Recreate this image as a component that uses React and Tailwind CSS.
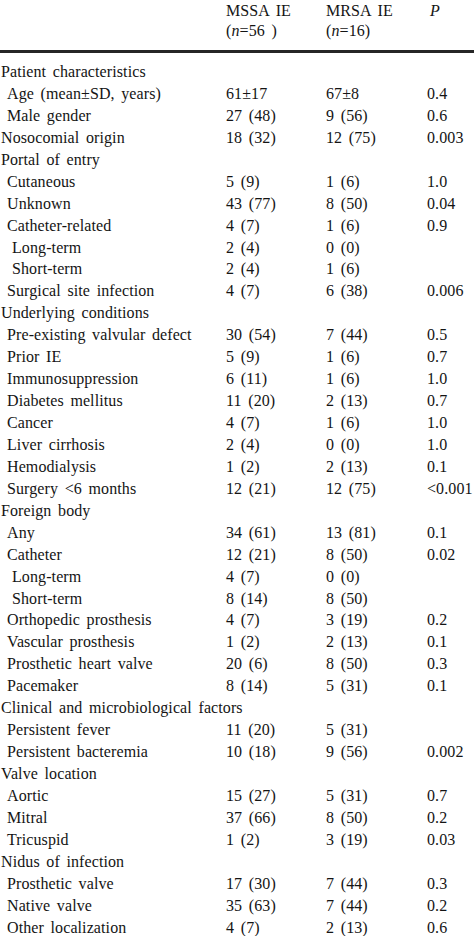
const rows = [
    ['Patient characteristics', 0],
    ['Age (mean±SD, years)', 1, '61±17', '67±8', '0.4'],
    ['Male gender', 1, '27 (48)', '9 (56)', '0.6'],
    ['Nosocomial origin', 0, '18 (32)', '12 (75)', '0.003'],
    ['Portal of entry', 0],
    ['Cutaneous', 1, '5 (9)', '1 (6)', '1.0'],
    ['Unknown', 1, '43 (77)', '8 (50)', '0.04'],
    ['Catheter-related', 1, '4 (7)', '1 (6)', '0.9'],
    ['Long-term', 2, '2 (4)', '0 (0)', ''],
    ['Short-term', 2, '2 (4)', '1 (6)', ''],
    ['Surgical site infection', 1, '4 (7)', '6 (38)', '0.006'],
    ['Underlying conditions', 0],
    ['Pre-existing valvular defect', 1, '30 (54)', '7 (44)', '0.5'],
    ['Prior IE', 1, '5 (9)', '1 (6)', '0.7'],
    ['Immunosuppression', 1, '6 (11)', '1 (6)', '1.0'],
    ['Diabetes mellitus', 1, '11 (20)', '2 (13)', '0.7'],
    ['Cancer', 1, '4 (7)', '1 (6)', '1.0'],
    ['Liver cirrhosis', 1, '2 (4)', '0 (0)', '1.0'],
    ['Hemodialysis', 1, '1 (2)', '2 (13)', '0.1'],
    ['Surgery <6 months', 1, '12 (21)', '12 (75)', '<0.001'],
    ['Foreign body', 0],
    ['Any', 1, '34 (61)', '13 (81)', '0.1'],
    ['Catheter', 1, '12 (21)', '8 (50)', '0.02'],
    ['Long-term', 2, '4 (7)', '0 (0)', ''],
    ['Short-term', 2, '8 (14)', '8 (50)', ''],
    ['Orthopedic prosthesis', 1, '4 (7)', '3 (19)', '0.2'],
    ['Vascular prosthesis', 1, '1 (2)', '2 (13)', '0.1'],
    ['Prosthetic heart valve', 1, '20 (6)', '8 (50)', '0.3'],
    ['Pacemaker', 1, '8 (14)', '5 (31)', '0.1'],
    ['Clinical and microbiological factors', 0],
    ['Persistent fever', 1, '11 (20)', '5 (31)', ''],
    ['Persistent bacteremia', 1, '10 (18)', '9 (56)', '0.002'],
    ['Valve location', 0],
    ['Aortic', 1, '15 (27)', '5 (31)', '0.7'],
    ['Mitral', 1, '37 (66)', '8 (50)', '0.2'],
    ['Tricuspid', 1, '1 (2)', '3 (19)', '0.03'],
    ['Nidus of infection', 0],
    ['Prosthetic valve', 1, '17 (30)', '7 (44)', '0.3'],
    ['Native valve', 1, '35 (63)', '7 (44)', '0.2'],
    ['Other localization', 1, '4 (7)', '2 (13)', '0.6'],
]

const indent = ['pl-[1px]', 'pl-[7px]', 'pl-[12px]']

export default function App() {
    return (
        <div className="h-[936px] w-[474px] overflow-hidden bg-white font-['Liberation_Serif',serif] text-[16px] tracking-[0.1px] [word-spacing:2.5px] text-[#141414]">
            {/* header */}
            <div className="grid grid-cols-[226px_100px_101px_1fr] pt-[1px] leading-[20px]">
                <div />
                <div>
                    <div>MSSA IE</div>
                    <div>
                        (<i>n</i>=56 )
                    </div>
                </div>
                <div>
                    <div>MRSA IE</div>
                    <div>
                        (<i>n</i>=16)
                    </div>
                </div>
                <div className="pl-[3px]">
                    <i>P</i>
                </div>
            </div>

            <div className="mt-[9px] h-[3px] bg-[#262626]" />

            <div className="pt-[8px]">
                {rows.map(([label, level, a, b, p], i) => (
                    <div
                        key={i}
                        className="grid h-[21.95px] grid-cols-[226px_100px_101px_1fr] whitespace-nowrap leading-[21.95px]"
                    >
                        <div className={indent[level]}>{label}</div>
                        <div>{a}</div>
                        <div>{b}</div>
                        <div>{p}</div>
                    </div>
                ))}
            </div>
        </div>
    )
}
